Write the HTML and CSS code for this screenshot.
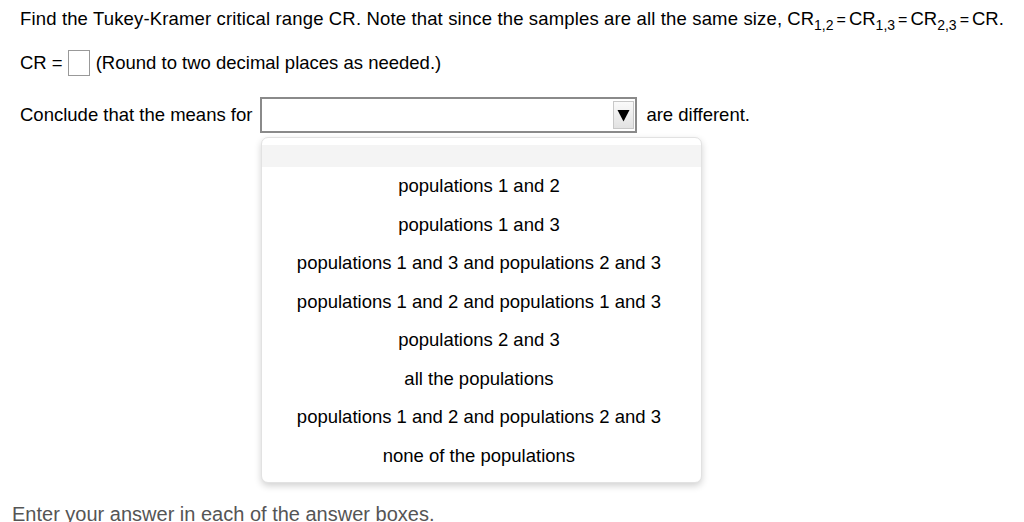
FILE: index.html
```html
<!DOCTYPE html>
<html>
<head>
<meta charset="utf-8">
<link rel="stylesheet" href="styles.css">
</head>
<body>
<div class="page">
  <p class="line l1"><span class="lead">Find the Tukey-Kramer critical range CR. Note that since the samples are all the same size,</span> CR<sub>1,2</sub><span class="eq">=</span>CR<sub>1,3</sub><span class="eq">=</span>CR<sub>2,3</sub><span class="eq">=</span>CR.</p>
  <p class="line l2"><span>CR =</span><span class="box"></span><span>(Round to two decimal places as needed.)</span></p>
  <div class="line l3">
    <span>Conclude that the means for</span>
    <div class="selwrap">
      <div class="select"><span class="arrow"><svg width="13" height="13" viewBox="0 0 13 13"><path d="M0.5 1 H12.5 L6.5 12.5 Z" fill="#000"/></svg></span></div>
      <div class="menu">
        <div class="opt blank"></div>
        <div class="opt">populations 1 and 2</div>
        <div class="opt">populations 1 and 3</div>
        <div class="opt">populations 1 and 3 and populations 2 and 3</div>
        <div class="opt">populations 1 and 2 and populations 1 and 3</div>
        <div class="opt">populations 2 and 3</div>
        <div class="opt">all the populations</div>
        <div class="opt">populations 1 and 2 and populations 2 and 3</div>
        <div class="opt">none of the populations</div>
      </div>
    </div>
    <span>are different.</span>
  </div>
  <p class="footer">Enter your answer in each of the answer boxes.</p>
</div>
</body>
</html>
```
FILE: styles.css
```css
html, body {
  margin: 0;
  padding: 0;
  background: #fff;
}
body {
  font-family: "Liberation Sans", Arial, sans-serif;
  font-size: 18.5px;
  color: #000;
  width: 1024px;
  height: 522px;
  overflow: hidden;
}
.page {
  padding: 0 0 0 20px;
}
.line {
  margin: 0;
  line-height: 22px;
}
.l1 {
  padding-top: 8px;
  white-space: nowrap;
}
.lead {
  letter-spacing: 0.15px;
}
.l1 sub {
  font-size: 14px;
  vertical-align: -5px;
  line-height: 0;
}
.eq {
  padding: 0 3px;
  font-size: 16px;
}
.l2 {
  margin-top: 19px;
  display: flex;
  align-items: center;
  height: 26px;
}
.box {
  display: inline-block;
  width: 20px;
  height: 24px;
  border: 1px solid #999;
  margin: 0 6px 0 5px;
}
.l3 {
  margin-top: 21px;
  display: flex;
  align-items: center;
  height: 36px;
}
.selwrap {
  position: relative;
  margin: 0 9px 0 8px;
}
.select {
  width: 373px;
  height: 32px;
  border: 2px solid #8a8a8a;
  background: #fff;
  display: flex;
  align-items: center;
  justify-content: flex-end;
}
.arrow {
  width: 21px;
  height: 28px;
  margin-right: 1px;
  border: 1px solid #c8c8c8;
  box-sizing: border-box;
  background: linear-gradient(#fafafa, #e2e2e2);
  display: flex;
  align-items: center;
  justify-content: center;
}
.menu {
  position: absolute;
  left: 1px;
  top: 40px;
  width: 441px;
  box-sizing: border-box;
  padding: 7px 0 7px;
  background: #fff;
  border: 1px solid #e2e2e2;
  border-radius: 7px;
  box-shadow: 0 3px 7px rgba(0, 0, 0, 0.18);
  z-index: 2;
}
.opt {
  height: 38.5px;
  display: flex;
  align-items: center;
  justify-content: center;
  padding-right: 6px;
  color: #000;
}
.opt.blank {
  height: 22px;
  padding-right: 0;
  background: #f4f4f4;
}
.footer {
  margin: 370px 0 0 -8px;
  color: #555;
  font-size: 20px;
  line-height: 22px;
}
```
